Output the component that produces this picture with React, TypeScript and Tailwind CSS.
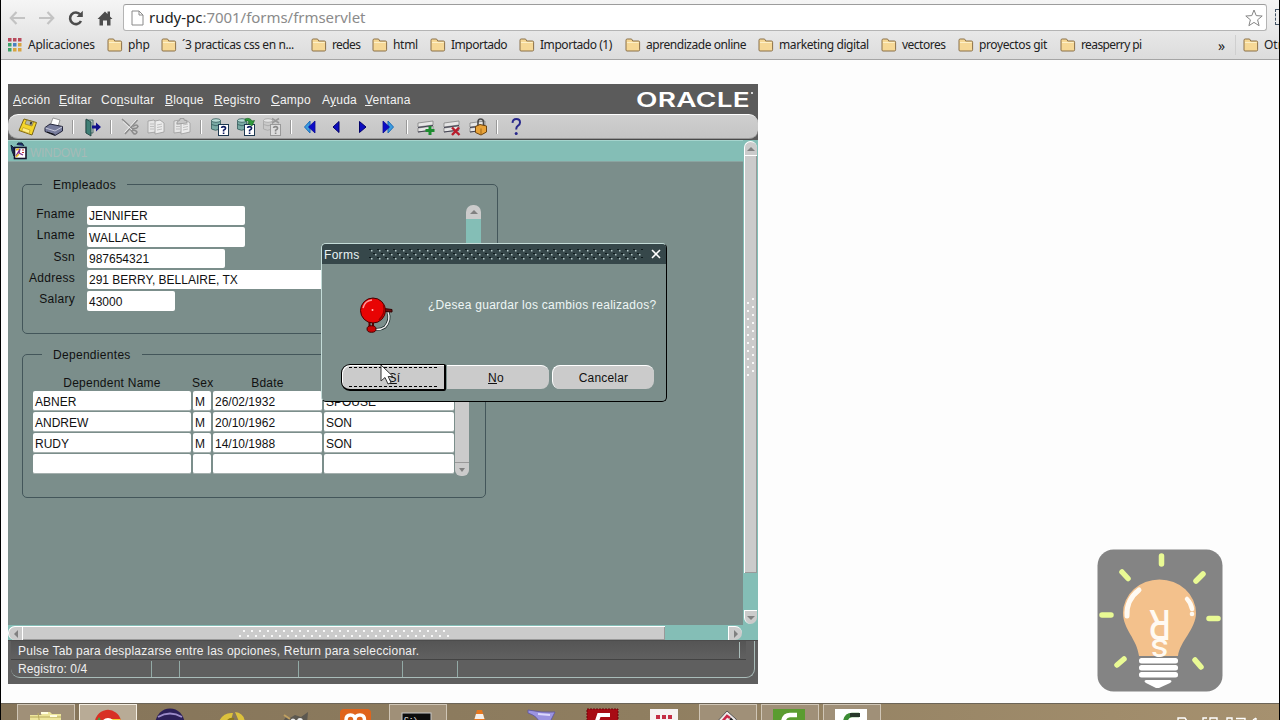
import React from 'react';

const bookmarks = [
  { label: 'php', width: 'w-[54px]', tracking: 'tracking-[-0.1px]' },
  { label: '´3 practicas css en n...', width: 'w-[150px]', tracking: 'tracking-[-0.4px]' },
  { label: 'redes', width: 'w-[61px]', tracking: 'tracking-[-0.6px]' },
  { label: 'html', width: 'w-[58px]', tracking: 'tracking-[-0.3px]' },
  { label: 'Importado', width: 'w-[89px]', tracking: 'tracking-[-0.5px]' },
  { label: 'Importado (1)', width: 'w-[106px]', tracking: 'tracking-[-0.45px]' },
  { label: 'aprendizade online', width: 'w-[133px]', tracking: 'tracking-[-0.45px]' },
  { label: 'marketing digital', width: 'w-[123px]', tracking: 'tracking-[-0.4px]' },
  { label: 'vectores', width: 'w-[77px]', tracking: 'tracking-[-0.5px]' },
  { label: 'proyectos git', width: 'w-[102px]', tracking: 'tracking-[-0.4px]' },
  { label: 'reasperry pi', width: 'w-[100px]', tracking: 'tracking-[-0.6px]' },
];

// the mnemonic is the index of the underlined letter
const menus = [
  { label: 'Acción', mnemonic: 0, width: 'w-[46px]' },
  { label: 'Editar', mnemonic: 0, width: 'w-[42px]' },
  { label: 'Consultar', mnemonic: 2, width: 'w-[64px]' },
  { label: 'Bloque', mnemonic: 0, width: 'w-[49px]' },
  { label: 'Registro', mnemonic: 0, width: 'w-[57px]' },
  { label: 'Campo', mnemonic: 0, width: 'w-[51px]' },
  { label: 'Ayuda', mnemonic: 1, width: 'w-[43px]' },
  { label: 'Ventana', mnemonic: 0, width: 'w-[50px]' },
];

const fields = [
  { label: 'Fname', value: 'JENNIFER', size: 'w-[158px] h-[19px]' },
  { label: 'Lname', value: 'WALLACE', size: 'w-[158px] h-[20px] pt-px' },
  { label: 'Ssn', value: '987654321', size: 'w-[138px] h-[19px]' },
  { label: 'Address', value: '291 BERRY, BELLAIRE, TX', size: 'w-[300px] h-[19px]' },
  { label: 'Salary', value: '43000', size: 'w-[88px] h-[20px] pt-px' },
];

const dependents = [
  ['ABNER', 'M', '26/02/1932', 'SPOUSE'],
  ['ANDREW', 'M', '20/10/1962', 'SON'],
  ['RUDY', 'M', '14/10/1988', 'SON'],
  ['', '', '', ''],
];

const FolderIcon = () => (
  <svg width="16" height="14" viewBox="0 0 16 14" className="shrink-0">
    <path d="M1 12V2.2Q1 1 2.2 1H6Q7 1 7.3 2L7.6 3H13.5Q14.6 3 14.6 4.2V11.8Q14.6 13 13.4 13H2Q1 13 1 12Z" fill="#f6d896" stroke="#8a7048" strokeWidth="1" />
    <path d="M2 4.5H13.6" stroke="#fdf0c8" />
  </svg>
);

const Svg = ({ children }: { children: React.ReactNode }) => (
  <span className="flex w-[26px] justify-center">
    <svg width="20" height="20" viewBox="0 0 20 20">{children}</svg>
  </span>
);

const Separator = () => (
  <span className="flex w-3 justify-center">
    <span className="h-[14px] w-[2px] border-l border-[#999] bg-white" />
  </span>
);

const Cylinder = ({ gray }: { gray?: boolean }) => (
  <g stroke={gray ? '#a4a4a4' : '#345a5a'} strokeWidth="0.8">
    <path d="M1.5 3.5V12Q5 14.5 10.5 12V3.5Z" fill={gray ? '#c9c9c9' : '#79aaa4'} />
    <ellipse cx="6" cy="3.5" rx="4.5" ry="1.8" fill={gray ? '#e4e4e4' : '#b8dcd6'} />
    <path d="M1.5 7.5Q6 10 10.5 7.5" fill="none" />
  </g>
);

const QuestionBox = ({ gray }: { gray?: boolean }) => (
  <g>
    <rect x="8.5" y="7.5" width="10" height="11" fill={gray ? '#ddd' : '#fff'} stroke={gray ? '#999' : '#1c3850'} />
    <path d="M11.5 11Q11.7 9.6 13.5 9.6Q15.6 9.6 15.6 11.3Q15.6 12.5 13.6 13.2V14.4M13.6 15.6V17" fill="none" stroke={gray ? '#888' : '#0c1c60'} strokeWidth="1.6" />
  </g>
);

const Sheets = () => (
  <g fill="#e6e6e6" stroke="#9c9c9c" strokeWidth="0.8">
    <path d="M2 4L8 3L10 5V15L2 16Z" />
    <path d="M9 4L14 3L18 6V15L9 17Z" fill="#ececec" />
    <path d="M4 7H8M4 9.500H8M4 12H8M11 8L16 7M11 10.500L16 9.500M11 13L16 12" stroke="#b4b4b4" />
  </g>
);

const Rows = () => (
  <g>
    <path d="M2 6L17 4V8L2 10ZM2 11L17 9V13L2 15Z" fill="#e6e6e6" stroke="#777" strokeWidth="0.7" />
    <path d="M2 10.5L17 8.5M2 15L17 13" stroke="#445" strokeWidth="1" />
  </g>
);

const Toolbar = () => (
  <div className="h-[26px] shrink-0 bg-[#5b5b5b]">
    <div className="flex h-full items-center rounded-l-[10px] rounded-r-[9px] border-y border-t-white border-b-[#4a4a4a] bg-linear-to-b from-[#cfcfcf] to-[#c4c4c4] pl-[7px] shadow-[inset_0_-1px_0_#989898]">
      <Svg>
        <path d="M6 2L18.5 5.5L14 18L1 13.5Z" fill="#f4d62a" stroke="#7a6414" />
        <path d="M8.500 3L15.500 5L14 9L7 7Z" fill="#b8b8a4" stroke="#806c20" strokeWidth="0.6" />
        <path d="M12.500 4.800L14.200 5.300L13.400 7.800L11.600 7.200Z" fill="#333" />
        <path d="M5 10.5L12 13L11 16.5L3.8 13.8Z" fill="#ffee80" stroke="#b08c18" strokeWidth="0.6" />
      </Svg>
      <Svg>
        <path d="M6 9L9 1L16 3L13.5 11Z" fill="#fff" stroke="#777" strokeWidth="0.7" />
        <path d="M1 10.5L6 7L18.5 9.5V14L11 18.5L1 14.5Z" fill="#777c9c" stroke="#24263c" />
        <path d="M1.5 11L11 14L18 10" fill="none" stroke="#c8cadc" />
        <path d="M3 15L10.5 17.5" stroke="#111" />
      </Svg>
      <Separator />
      <Svg>
        <path d="M4 3H11V16H4Z" fill="#b8ccc8" stroke="#355" strokeWidth="0.8" />
        <path d="M4 2L9 5V19L4 16Z" fill="#3f7f76" stroke="#1d3f3c" strokeWidth="0.8" />
        <path d="M10 8.5H14V5.5L19 10L14 14.5V11.5H10Z" fill="#11118c" />
      </Svg>
      <Separator />
      <Svg>
        <g fill="none" stroke="#8c8c8c" strokeWidth="1.5">
          <path d="M2 2L13.5 12.5M17.500 3L5 17" />
          <path d="M13 9.500Q17 6.500 18 9.500Q17 12 13 11.500" />
          <path d="M11 13Q16 12.500 17 15Q16 18 13.500 16.500Z" />
        </g>
        <path d="M3 4.500L12 13M16.500 2.500L4.500 15.500" stroke="#f6f6f6" strokeWidth="0.8" />
      </Svg>
      <Svg><Sheets /></Svg>
      <Svg>
        <Sheets />
        <path d="M5 5L8 3V1.500H12V3L15 4V6L5 7Z" fill="#c8c8c8" stroke="#949494" strokeWidth="0.8" />
      </Svg>
      <Separator />
      <Svg><Cylinder /><QuestionBox /></Svg>
      <Svg>
        <Cylinder />
        <QuestionBox />
        <path d="M9 2Q14 0 16 4L18.5 3.5L16 9L11.5 6L13.5 5.3Q12 3 9 4Z" fill="#2f9a3c" stroke="#145c20" strokeWidth="0.6" />
      </Svg>
      <Svg>
        <Cylinder gray />
        <QuestionBox gray />
        <path d="M10 1.5L17 6M17 1.5L10 6" stroke="#999" strokeWidth="1.6" />
      </Svg>
      <Separator />
      <Svg>
        <path d="M10 4L4.5 10L10 16Z" fill="#3c9ce0" stroke="#1c6cb8" />
        <path d="M15 4V16L8.500 10Z" fill="#0c0cc8" stroke="#0c0c90" strokeWidth="0.8" />
      </Svg>
      <Svg><path d="M13 4.5V15.5L7 10Z" fill="#0c0cc0" stroke="#000068" /></Svg>
      <Svg><path d="M7.5 4.5V15.5L14 10Z" fill="#0c0cc0" stroke="#000068" /></Svg>
      <Svg>
        <path d="M10 4L15.500 10L10 16Z" fill="#3c9ce0" stroke="#1c6cb8" />
        <path d="M5 4V16L11.500 10Z" fill="#0c0cc8" stroke="#0c0c90" strokeWidth="0.8" />
      </Svg>
      <Separator />
      <Svg>
        <Rows />
        <path d="M14 9V18M9.5 13.5H18.5" stroke="#1d8c30" strokeWidth="3" />
      </Svg>
      <Svg>
        <Rows />
        <path d="M10 10.5L17.5 18M17 10.5L10 18" stroke="#b81c2c" strokeWidth="2.4" />
      </Svg>
      <Svg>
        <Rows />
        <path d="M10 9V5Q10 2 12.5 2Q15.5 2 15.5 5V8" fill="none" stroke="#4a4a4a" strokeWidth="1.6" />
        <path d="M7.5 9.5L12 7.5L18.5 9V15L13 18L7.5 15.5Z" fill="#e8a238" stroke="#6c4410" />
        <path d="M13 11.5V17.5" stroke="#a06818" />
      </Svg>
      <Separator />
      <Svg>
        <path d="M6.5 5.8Q6.8 2 10.3 2Q14 2 14 5.4Q14 7.6 11.8 8.8Q10.2 9.8 10.2 12.6" fill="none" stroke="#28288c" strokeWidth="2" />
        <circle cx="10.2" cy="16.5" r="1.5" fill="#28288c" />
      </Svg>
    </div>
  </div>
);

const Grip = ({ id, width, height }: { id: string; width: number; height: number }) => (
  <svg width={width} height={height} className="shrink-0">
    <defs>
      <pattern id={id} width="8" height="8" patternUnits="userSpaceOnUse">
        <path d="M0 0H2V1H0ZM4 4H6V5H4Z" fill="#0e1a1c" />
        <path d="M2 1H3.500V2.500H2ZM6 5H7.500V6.500H6Z" fill="#b4c8c8" />
      </pattern>
    </defs>
    <rect width={width} height={height} fill={`url(#${id})`} />
  </svg>
);

const HorizontalGrip = () => (
  <svg width="212" height="8" className="shrink-0">
    <defs>
      <pattern id="h-grip" width="8" height="10" patternUnits="userSpaceOnUse">
        <path d="M5 0H7V2H5ZM1 5H3V7H1Z" fill="#f8f8f8" />
      </pattern>
    </defs>
    <rect width="212" height="8" fill="url(#h-grip)" />
  </svg>
);

const VerticalGrip = () => (
  <svg width="8" height="80" className="shrink-0">
    <defs>
      <pattern id="v-grip" width="10" height="8" patternUnits="userSpaceOnUse">
        <path d="M0 5H2V7H0ZM5 1H7V3H5Z" fill="#f8f8f8" />
      </pattern>
    </defs>
    <rect width="8" height="80" fill="url(#v-grip)" />
  </svg>
);

const Arrow = ({ d }: { d: string }) => (
  <svg width="8" height="8" viewBox="0 0 8 8">
    <path d={d} fill="#808080" />
  </svg>
);

const Empleados = () => (
  <fieldset className="h-[158px] w-[476px] rounded-[5px] border border-[#43565a]">
    <legend className="ml-[19px] h-4 px-[11px] leading-[18px] tracking-[0.35px]">Empleados</legend>
    <div className="flex justify-between pt-[14px] pr-4">
      <div className="flex flex-col gap-[2px]">
        {fields.map((f) => (
          <div key={f.label} className="flex items-start">
            <span className="w-[52px] text-right leading-4 tracking-[0.3px]">{f.label}</span>
            <span className={`ml-3 flex items-center rounded-[2px] bg-white pl-[2px] ${f.size}`}>{f.value}</span>
          </div>
        ))}
      </div>
      <div className="-mt-px -ml-40 flex h-[106px] w-[15px] shrink-0 flex-col">
        <div className="flex h-[14px] shrink-0 items-center justify-center rounded-t-[7px] bg-[#cbcbcb]">
          <Arrow d="M0 6L4 2L8 6Z" />
        </div>
        <div className="flex-1 bg-[#84beb6]" />
      </div>
    </div>
  </fieldset>
);

const Dependientes = () => (
  <fieldset className="mt-3 h-[152px] w-[464px] rounded-[5px] border border-[#43565a]">
    <legend className="ml-[19px] h-4 px-[11px] leading-[18px] tracking-[0.3px]">Dependientes</legend>
    <div className="flex pt-3 pl-[10px]">
      <div>
        <div className="grid h-[17px] grid-cols-[158px_18px_109px_130px] gap-[2px] text-center leading-[18px] tracking-[0.25px]">
          <span>Dependent Name</span>
          <span className="-ml-px">Sex</span>
          <span>Bdate</span>
          <span>Relationship</span>
        </div>
        <div className="flex flex-col gap-px">
          {dependents.map((row, i) => (
            <div key={i} className="grid h-[20px] grid-cols-[158px_18px_109px_130px] gap-[2px]">
              {row.map((cell, j) => (
                <span key={j} className="flex h-[20px] items-center rounded-[2px] border-b border-[#a5b0ae] bg-white pt-[2px] pl-[2px]">{cell}</span>
              ))}
            </div>
          ))}
        </div>
      </div>
      <div className="mt-[17px] ml-px flex h-[85px] w-[14px] flex-col justify-end rounded-b-[6px] bg-[#cbcbcb]">
        <div className="flex h-[14px] items-center justify-center border-t border-[#999]">
          <Arrow d="M1 2H7L4 6Z" />
        </div>
      </div>
    </div>
  </fieldset>
);

const SaveDialog = () => (
  <div className="absolute top-[159px] left-[313px] flex h-[159px] w-[346px] flex-col overflow-hidden rounded-[5px] border border-t-[#c4dcd8] border-r-black border-b-black border-l-[#c4dcd8] bg-[#7b8e8b]">
    <div className="flex h-5 shrink-0 items-center bg-[#36474a] pl-[2px] text-[#e9f3f3]">
      <span className="w-[45px] pt-[2px] tracking-[0.3px]">Forms</span>
      <Grip id="dialog-grip" width={274} height={11} />
      <svg width="10" height="10" viewBox="0 0 10 10" className="ml-[8px]">
        <path d="M1 1L9 9M9 1L1 9" stroke="#fff" strokeWidth="1.6" />
      </svg>
    </div>
    <div className="flex pt-8 pl-[37px]">
      <svg width="36" height="38" viewBox="0 0 36 38">
        <path d="M29 16Q32 24 26 31Q22 34 16 33.5" fill="none" stroke="#1c2a2a" strokeWidth="3" />
        <path d="M29 16Q32 24 26 31Q22 34 16 33.5" fill="none" stroke="#f4f4f4" strokeWidth="1.5" />
        <path d="M25 12.500L33 13.500V16L26 15.500Z" fill="#6c1010" stroke="#300" />
        <path d="M10.500 26V31M14 26V31" stroke="#5c0000" strokeWidth="2" />
        <circle cx="14" cy="14.5" r="12.5" fill="#e80404" stroke="#400" />
        <path d="M4 12Q6 4.5 13 4" fill="none" stroke="#ff9c9c" strokeWidth="1.4" />
        <path d="M24.500 9Q27 17 20 24" fill="none" stroke="#980000" strokeWidth="1.6" />
        <circle cx="13.5" cy="14" r="1" fill="#ffc0c0" />
        <ellipse cx="12.5" cy="33" rx="4.5" ry="3.3" fill="#c80404" stroke="#400" />
      </svg>
      <span className="ml-[33px] leading-[18px] tracking-[0.27px] whitespace-nowrap text-[#eef6f5]">¿Desea guardar los cambios realizados?</span>
    </div>
    <div className="mt-[30px] flex items-start pl-[19px]">
      <button className="flex h-[27px] w-[105px] flex-col rounded-l-[9px] rounded-r-[2px] border border-r-2 border-b-2 border-black bg-[#cbcbcb] px-[7px] pt-[2px] shadow-[inset_1px_1px_0_#fff]">
        <span className="h-5 w-full border-y border-dashed border-black pl-[3px] leading-[20px] tracking-[0.4px]">
          <u className="underline-offset-1">S</u>í
        </span>
      </button>
      <button className="mt-px ml-px h-6 w-[102px] rounded-r-[8px] border-t border-white bg-[#cbcbcb] pt-px pr-1 tracking-[0.3px]">
        <u className="underline-offset-1">N</u>o
      </button>
      <button className="mt-px ml-[3px] h-6 w-[102px] rounded-[8px] border-t border-l border-white bg-[#cbcbcb] pt-px tracking-[0.2px]">
        Cancelar
      </button>
    </div>
    <svg width="17" height="22" viewBox="0 0 17 22" className="absolute top-[120px] left-[58px]">
      <path d="M1 1V17L5 13.5L8 20L11 18.7L8.2 12.5H13Z" fill="#fff" stroke="#333" strokeWidth="1" />
    </svg>
  </div>
);

const OracleForms = () => (
  <div className="relative flex h-[600px] w-[750px] flex-col bg-[#7b8e8b] font-['Liberation_Sans',sans-serif] text-[12px] text-[#111]">
    <div className="flex h-[30px] shrink-0 items-center bg-[#5b5b5b] pl-[5px] tracking-[0.22px] text-[#f2f2f2]">
      {menus.map((m) => (
        <span key={m.label} className={`shrink-0 pt-[2px] ${m.width}`}>
          {m.label.slice(0, m.mnemonic)}
          <u className="underline-offset-1">{m.label[m.mnemonic]}</u>
          {m.label.slice(m.mnemonic + 1)}
        </span>
      ))}
      <svg width="122" height="28" viewBox="0 0 122 28" className="mr-[2px] ml-auto">
        <text x="2" y="21.500" fontFamily="Inter, sans-serif" fontSize="20" fontWeight="600" fill="#fff" textLength="114" lengthAdjust="spacingAndGlyphs">ORACLE</text>
        <circle cx="118" cy="8" r="1" fill="#fff" />
      </svg>
    </div>
    <Toolbar />
    <div className="flex h-[500px] shrink-0">
      <div className="flex w-[735px] flex-col">
        <div className="flex h-[21px] shrink-0 items-center border-t border-[#a5d4cd] bg-[#84beb6] pl-[2px]">
          <svg width="18" height="18" viewBox="0 0 18 18">
            <path d="M1 3L4 6V14L2 9ZM7 3L8 1H12L14 4" fill="#1c2c6c" stroke="#123" />
            <rect x="4.5" y="5.5" width="11.500" height="11" fill="#fff" stroke="#15152c" strokeWidth="1.6" />
            <path d="M6 14L10 7L9 11L13 13" fill="none" stroke="#7c2c90" strokeWidth="1.3" />
            <path d="M6 8L9 7M6 15L9 12" stroke="#e8c020" strokeWidth="1.6" />
            <path d="M12 8H14M12 10.5H14" stroke="#c03030" />
          </svg>
          <span className="ml-[2px] pt-[3px] tracking-[-0.3px] text-[#a6bab7]">WINDOW1</span>
        </div>
        <div className="flex-1 border-t border-[#8aa5a1] pt-[14px] pl-[14px]">
          <Empleados />
          <Dependientes />
        </div>
        <div className="flex h-[15px] shrink-0 bg-[#84beb6] pt-px">
          <div className="flex w-[14px] items-center justify-center rounded-l-[7px] border-t border-l border-white bg-[#cbcbcb]">
            <Arrow d="M6 0L2 4L6 8Z" />
          </div>
          <div className="flex w-[643px] items-center justify-center border-t border-l border-white bg-[#cbcbcb] shadow-[inset_-1px_-1px_0_#999]">
            <HorizontalGrip />
          </div>
          <div className="mr-px ml-auto flex w-[14px] items-center justify-center rounded-r-[7px] border-t border-l border-white bg-[#cbcbcb]">
            <Arrow d="M2 0L6 4L2 8Z" />
          </div>
        </div>
      </div>
      <div className="flex w-[15px] flex-col bg-[#84beb6] pt-px pr-px pl-px pb-[16px]">
        <div className="flex h-[14px] shrink-0 items-center justify-center rounded-t-[7px] border-t border-l border-white bg-[#cbcbcb]">
          <Arrow d="M0 6L4 2L8 6Z" />
        </div>
        <div className="flex h-[418px] shrink-0 items-center justify-center border-t border-l border-white bg-[#cbcbcb] pb-[56px] shadow-[inset_-1px_-1px_0_#999]">
          <VerticalGrip />
        </div>
        <div className="mt-auto flex h-[14px] shrink-0 items-center justify-center rounded-b-[7px] border-t border-l border-white bg-[#cbcbcb]">
          <Arrow d="M0 2H8L4 6Z" />
        </div>
      </div>
    </div>
    <div className="flex-1 border-t border-[#4c4c4c] bg-[#5f5f5f] px-[3px] tracking-[0.225px] text-[#f0f0f0]">
      <div className="h-[37px] rounded-b-[9px] border-r border-b border-[#a9bcb9]">
        <div className="mr-2 flex h-[19px] items-center border-b border-[#434343] bg-linear-to-b from-[#555] to-[#606060] pl-[7px]">
          <span className="pt-[2px]">Pulse Tab para desplazarse entre las opciones, Return para seleccionar.</span>
          <span className="mr-[6px] ml-auto h-4 w-px bg-[#a9bcb9]" />
        </div>
        <div className="flex h-[17px] items-center pl-[7px]">
          <span className="w-[133px] tracking-[0.1px]">Registro: 0/4</span>
          <span className="h-4 w-[28px] border-l border-[#93aaa6]" />
          <span className="h-4 w-[119px] border-l border-[#93aaa6]" />
          <span className="h-4 w-[104px] border-l border-[#93aaa6]" />
          <span className="h-4 w-[55px] border-l border-[#93aaa6]" />
          <span className="h-4 w-px bg-[#93aaa6]" />
        </div>
      </div>
    </div>
    <SaveDialog />
  </div>
);

const BrowserChrome = () => (
  <div className="h-[60px] shrink-0 border-b border-[#a5a5a5] bg-linear-to-b from-[#f5f5f5] to-[#dcdcdc] font-['Noto_Sans',sans-serif]">
    <div className="flex h-[31px] items-end">
      <div className="flex h-[27px] w-[122px] shrink-0 items-center pl-2">
        <svg width="108" height="18" viewBox="0 0 108 18">
          <g fill="none" stroke="#c3c3c3" strokeWidth="2.2">
            <path d="M16 9H2M7.5 3L1.8 9L7.5 15" />
            <path d="M30 9H44M38.5 3L44.2 9L38.5 15" />
          </g>
          <path d="M71.3 5.5A5.8 5.8 0 1 0 72 12" fill="none" stroke="#4c4c4c" strokeWidth="2.6" />
          <path d="M67.5 8H73.8V1.8Z" fill="#4c4c4c" />
          <path d="M88.5 10L96 2.5L98.5 5V2.5H101V7.5L103.5 10H101.5V16.5H98V11.5H94V16.5H90.5V10Z" fill="#4c4c4c" />
        </svg>
      </div>
      <div className="flex h-[27px] w-[1144px] items-center rounded-[3px] border border-[#b4b4b4] border-t-[#9c9c9c] bg-white pl-[7px]">
        <svg width="13" height="16" viewBox="0 0 13 16">
          <path d="M1 1H8L12 5V15H1ZM8 1V5H12" fill="#fff" stroke="#8a8a8a" />
        </svg>
        <span className="ml-[5px] text-[15px] tracking-[-0.03px] whitespace-nowrap text-[#8b8b8b]">
          <span className="text-[#222]">rudy-pc</span>:7001/forms/frmservlet
        </span>
        <svg width="18" height="18" viewBox="0 0 18 18" className="mr-[3px] ml-auto">
          <path d="M9 1L11.2 6.6L17.2 7L12.6 10.8L14.1 16.7L9 13.4L3.9 16.7L5.4 10.8L.8 7L6.8 6.6Z" fill="#fff" stroke="#858585" />
        </svg>
      </div>
      <span className="mb-[6px] ml-2 h-4 w-1 border-y border-l border-dashed border-[#456]" />
    </div>
    <div className="flex h-[28px] items-center pl-[7px] text-[12px] whitespace-nowrap text-[#222]">
      <svg width="14" height="14" viewBox="0 0 14 14" className="shrink-0">
        <path d="M0 0h3.5v3.5h-3.5zM5 0h3.5v3.5h-3.5zM10 0h3.5v3.5h-3.5z" fill="#b84a5c" />
        <path d="M0 5h3.5v3.5h-3.5z" fill="#3ca068" />
        <path d="M5 5h3.5v3.5h-3.5z" fill="#4880c0" />
        <path d="M10 5h3.5v3.5h-3.5zM5 10h3.5v3.5h-3.5zM10 10h3.5v3.5h-3.5z" fill="#d8a440" />
        <path d="M0 10h3.5v3.5h-3.5z" fill="#3ca068" />
      </svg>
      <span className="ml-[6px] w-[79px] shrink-0 tracking-[-0.25px]">Aplicaciones</span>
      {bookmarks.map((b) => (
        <span key={b.label} className={`flex shrink-0 items-center ${b.width}`}>
          <FolderIcon />
          <span className={`ml-[5px] ${b.tracking}`}>{b.label}</span>
        </span>
      ))}
      <span className="ml-[58px] w-[17px] shrink-0 text-[14px]">»</span>
      <span className="h-5 w-px shrink-0 bg-[#cfcfcf]" />
      <span className="ml-[7px] flex shrink-0 items-center">
        <FolderIcon />
        <span className="ml-[5px]">Otros</span>
      </span>
    </div>
  </div>
);

const TaskSlot = ({ children, frame }: { children: React.ReactNode; frame?: string }) => (
  <div className={`flex h-5 w-[58px] justify-center pt-1 ${frame ?? ''}`}>
    <svg width="36" height="16" viewBox="0 0 36 16">{children}</svg>
  </div>
);

const openFrame = 'border border-b-0 border-[#d0c6b6] bg-[#a09078]';

const Taskbar = () => (
  <div className="flex h-[17px] shrink-0 gap-1 overflow-hidden border-t border-[#6c6558] bg-linear-to-r from-[#857459] via-[#8f7e60] to-[#a6916f] pl-4">
    <TaskSlot frame={openFrame}>
      <path d="M2 6H13L15 3H22L24 5H33V16H2Z" fill="#ede69c" />
      <path d="M2 8H33M10 4L12 16" stroke="#b8aa5c" />
      <path d="M13 4H20M22 7H29" stroke="#fffde0" strokeWidth="2" />
    </TaskSlot>
    <TaskSlot frame="border border-b-0 border-[#f4eee2] bg-[#b8ab96]">
      <path d="M5 16A13 13 0 0 1 31 12L32 16Z" fill="#d83024" />
      <path d="M5 16L9 8L14 16Z" fill="#3ca04c" />
      <path d="M20 10H30Q33 13 33 16H22Z" fill="#f2d030" />
      <circle cx="18" cy="16" r="6" fill="#4c8ce4" stroke="#fff" strokeWidth="2" />
    </TaskSlot>
    <TaskSlot>
      <circle cx="18" cy="15" r="14.5" fill="#2c2058" />
      <path d="M6 9Q18 2 30 9M4 13H32" stroke="#9c8cc8" strokeWidth="2" fill="none" />
    </TaskSlot>
    <TaskSlot>
      <path d="M4 16Q8 4 19 5L16 16ZM21 4Q31 5 31 16H26Z" fill="#dcc23c" />
      <path d="M12 16Q14 10 20 11" stroke="#8c7818" strokeWidth="2" fill="none" />
    </TaskSlot>
    <TaskSlot>
      <path d="M5 16L10 9L14 10L19 7L25 9L32 4L31 16Z" fill="#5c5850" />
      <circle cx="17" cy="13" r="2.5" fill="#eee" />
      <circle cx="24" cy="13" r="3" fill="#eee" />
      <path d="M8 7L14 11" stroke="#c0a060" strokeWidth="2" />
    </TaskSlot>
    <TaskSlot>
      <rect x="2" y="1" width="31" height="20" rx="4" fill="#e0641c" />
      <path d="M8 16V12Q8 7 12.5 7Q17 7 17 12Q17 7 22 7Q26.5 7 26.5 12V16" fill="none" stroke="#fff" strokeWidth="3.5" />
    </TaskSlot>
    <TaskSlot frame={openFrame}>
      <rect x="2" y="4" width="29" height="18" fill="#0c0c0c" stroke="#c8c8c8" />
      <text x="4" y="13" fontSize="8" fontFamily="Liberation Mono, monospace" fill="#fff">C:\</text>
    </TaskSlot>
    <TaskSlot>
      <path d="M15 2H20L24 16H11Z" fill="#e87820" />
      <path d="M14 6H21L22.5 11H12.5Z" fill="#f4f0ec" />
    </TaskSlot>
    <TaskSlot>
      <path d="M4 2Q18 5 31 4L25 16H16Q14 8 4 5Z" fill="#9c94e0" stroke="#5c54a4" strokeWidth="0.8" />
      <path d="M14 6L26 7" stroke="#dcd8fc" strokeWidth="2" />
    </TaskSlot>
    <TaskSlot>
      <rect x="1" y="1" width="31" height="20" fill="#a80c14" stroke="#6c0408" strokeDasharray="2 1" />
      <path d="M10 16L13 7H24" fill="none" stroke="#fff" strokeWidth="4" />
    </TaskSlot>
    <TaskSlot>
      <rect x="2" y="1" width="28" height="20" fill="#f6f2f2" />
      <path d="M8 7H12V11H8ZM14 7H18V11H14ZM20 7H24V11H20Z" fill="#c42c44" />
    </TaskSlot>
    <TaskSlot frame={openFrame}>
      <path d="M4 16L17 2L26 10L29 16Z" fill="#f0eaea" stroke="#555" />
      <path d="M11 14L17 7L20 9" stroke="#c82848" strokeWidth="2.5" fill="none" />
      <path d="M18 16L21 10L26 15" stroke="#222" strokeWidth="2" fill="none" />
    </TaskSlot>
    <TaskSlot frame={openFrame}>
      <rect x="1" y="0" width="32" height="20" fill="#5a9c30" />
      <path d="M11 16Q11 6 18 6H25" fill="none" stroke="#fff" strokeWidth="4.5" />
    </TaskSlot>
    <TaskSlot frame={openFrame}>
      <rect x="1" y="0" width="32" height="20" fill="#fff" />
      <path d="M11 16Q11 6 18 6H25" fill="none" stroke="#3c8c34" strokeWidth="4.5" />
      <path d="M16 6H26" stroke="#28382c" strokeWidth="4" />
    </TaskSlot>
    <svg width="92" height="17" viewBox="0 0 92 17" className="mr-[12px] ml-auto shrink-0">
      <g fill="none" stroke="#fff" strokeWidth="1.4">
        <path d="M3 17V14H10L12 17M28 17V14H32M35 17V14H42V17M52 17V14H57V17M61 14.500H70V17" />
        <path d="M81 14V17M78 16L81 14" />
      </g>
    </svg>
  </div>
);

const BulbBadge = () => (
  <svg width="126" height="143" viewBox="0 0 126 143" className="absolute top-[549px] left-[1096px]">
    <rect x="0.5" y="0.5" width="125" height="142" rx="16" fill="#848484" />
    <path d="M42 107C40 90 26 80 26 64A36.500 33.500 0 0 1 99 64C99 80 83 92 81 107Z" fill="#f3c18c" />
    <g stroke="#e9fa94" strokeWidth="5.500" strokeLinecap="round">
      <path d="M64.500 7V15M25 23L31 29.500M106 25L99 32M5 66H14M112 69.500H121M27 110L20 116M98 111L104 118" />
    </g>
    <path d="M30 67Q29 51 42 41" fill="none" stroke="#fffaf2" strokeWidth="5" strokeLinecap="round" />
    <path d="M90 50Q94 54 95 60" fill="none" stroke="#fffaf2" strokeWidth="4.500" strokeLinecap="round" />
    <circle cx="95" cy="65" r="2.300" fill="#fffaf2" />
    <g fill="#fffaf2" fontFamily="Inter, sans-serif">
      <text transform="translate(74 61) rotate(180) scale(.84 1)" fontSize="41" fontWeight="500">R</text>
      <text transform="translate(71.500 90) rotate(180) scale(.9 .8)" fontSize="30" fontWeight="600">S</text>
    </g>
    <g fill="#fff">
      <rect x="42" y="109" width="39" height="5.500" rx="2.500" />
      <rect x="42" y="116" width="39" height="5.500" rx="2.500" />
      <rect x="42" y="123" width="39" height="5.500" rx="2.500" />
      <path d="M49 131H73Q76 132 73 134L62 139H59L49 134Q46 132 49 131Z" />
    </g>
  </svg>
);

const App: React.FC = () => {
  return (
    <div className="relative flex h-[720px] w-[1280px] flex-col overflow-hidden border-x border-black bg-[#fdfdfd]">
      <BrowserChrome />
      <div className="flex-1 pt-6 pl-[7px]">
        <OracleForms />
      </div>
      <Taskbar />
      <BulbBadge />
    </div>
  );
};

export default App;
